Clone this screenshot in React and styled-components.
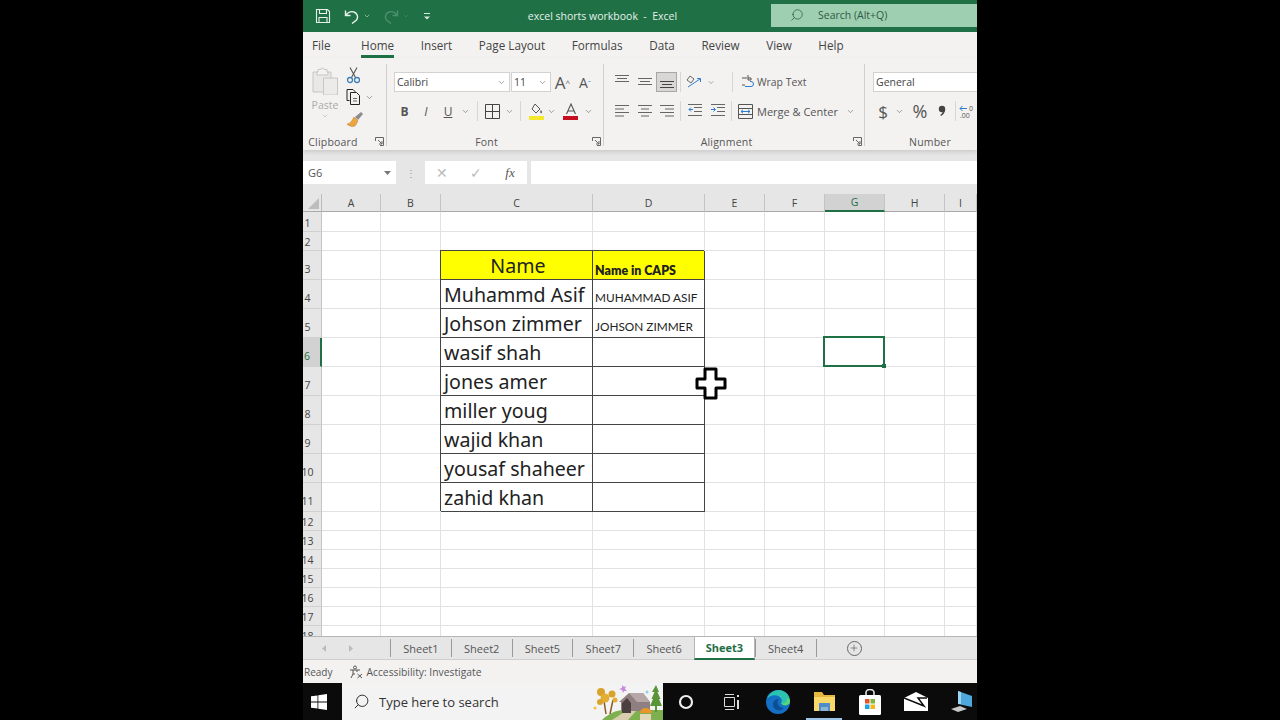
import React from 'react';
import styled, { createGlobalStyle } from 'styled-components';
import { ChevronDown, Search, Plus } from 'lucide-react';

const GlobalStyle = createGlobalStyle`
  html, body { margin: 0; padding: 0; background: #000; }
  body { font-family: "Open Sans", "Liberation Sans", sans-serif; }
`;

const Page = styled.div`
  width: 1280px;
  height: 720px;
  background: #000;
  display: flex;
  justify-content: center;
  overflow: hidden;
`;

const Screen = styled.div`
  width: 674px;
  height: 720px;
  display: flex;
  flex-direction: column;
  overflow: hidden;
  background: #e6e6e6;
  color: #444;
  font-size: 11px;
`;

const Gap = styled.span`
  width: ${p => p.$w}px;
  flex: none;
`;

/* title bar */
const TitleBar = styled.div`
  height: 32px;
  flex: none;
  background: #1f7145;
  color: #e6f0ea;
  display: flex;
  align-items: center;
`;

const QuickTools = styled.div`
  display: flex;
  align-items: center;
  width: 176px;
  padding-left: 12px;
  box-sizing: border-box;
  gap: 3px;
  flex: none;
`;

const TitleText = styled.div`
  width: 247px;
  flex: none;
  font-size: 10.5px;
  white-space: nowrap;
  text-align: center;
`;

const SearchBox = styled.div`
  margin-left: 45px;
  margin-top: -2px;
  flex: 1;
  height: 23px;
  background: #9fcfb1;
  color: #2f5a44;
  font-size: 10.5px;
  display: flex;
  align-items: center;
  gap: 14px;
  padding-left: 19px;
`;

const MirrorSearch = styled(Search)`
  transform: scaleX(-1);
  flex: none;
`;

/* ribbon tabs */
const TabRow = styled.div`
  height: 26px;
  flex: none;
  background: #f3f2f1;
  display: flex;
  align-items: center;
  padding-left: 9px;
  gap: 26.6px;
  font-size: 11.7px;
`;

const RibbonTab = styled.div`
  height: 26px;
  line-height: 27px;
  white-space: nowrap;
  box-sizing: border-box;
  color: #444;
  margin-right: ${p => (p.$first ? 4 : 0)}px;
  border-bottom: ${p => (p.$active ? '3px solid #1f7145' : '0')};
`;

/* ribbon body */
const Ribbon = styled.div`
  height: 92px;
  flex: none;
  background: #f3f2f1;
  display: flex;
  box-shadow: 0 2px 4px rgba(0, 0, 0, 0.12);
  position: relative;
  overflow: hidden;
`;

const Group = styled.div`
  width: ${p => p.$w}px;
  flex: none;
  display: flex;
  flex-direction: column;
  position: relative;
  box-sizing: border-box;
  padding-left: ${p => p.$pad || 0}px;
  &::after {
    content: '';
    position: absolute;
    right: 0;
    top: 6px;
    bottom: 4px;
    width: 1px;
    background: ${p => (p.$last ? 'transparent' : '#d2d0ce')};
  }
`;

const GroupBody = styled.div`
  height: 76px;
  display: flex;
  flex-direction: column;
  gap: 9px;
  padding-top: 14px;
  box-sizing: border-box;
`;

const GroupLabel = styled.div`
  height: 16px;
  font-size: 10.5px;
  letter-spacing: 0.2px;
  line-height: 17px;
  text-align: center;
  color: #555;
  margin-left: ${p => -(p.$pad || 0)}px;
  padding: 0 ${p => p.$right || 0}px 0 ${p => p.$left || 0}px;
`;

const Launcher = styled.svg`
  position: absolute;
  right: 3px;
  bottom: 4px;
  width: 9px;
  height: 9px;
`;

const ToolRow = styled.div`
  display: flex;
  align-items: center;
  height: 20px;
  flex: none;
`;

const Slot = styled.div`
  width: ${p => p.$w}px;
  height: 20px;
  flex: none;
  display: flex;
  align-items: center;
  justify-content: center;
  color: #555;
  box-sizing: border-box;
  font-size: ${p => p.$size || 12}px;
  font-weight: ${p => (p.$bold ? 700 : 400)};
  font-style: ${p => (p.$italic ? 'italic' : 'normal')};
  text-decoration: ${p => (p.$under ? 'underline' : 'none')};
  background: ${p => (p.$active ? '#d9d7d5' : 'transparent')};
  outline: ${p => (p.$active ? '1px solid #a9a7a5' : '0')};
  outline-offset: -1px;
`;

const Caret = styled.sup`
  font-size: 8px;
  color: ${p => p.$color || '#555'};
`;

const ToolSep = styled.div`
  width: 1px;
  height: 20px;
  background: #d8d6d4;
  flex: none;
`;

const Select = styled.div`
  width: ${p => p.$w}px;
  height: 20px;
  flex: none;
  box-sizing: border-box;
  background: #fff;
  border: 1px solid #d4d2d0;
  display: flex;
  align-items: center;
  justify-content: space-between;
  padding: 0 3px 0 2px;
  font-size: 10.5px;
  color: #444;
  margin-right: ${p => p.$mr || 0}px;
`;

const LabelTool = styled.div`
  display: flex;
  align-items: center;
  gap: ${p => p.$gap || 4}px;
  font-size: ${p => p.$size || 11}px;
  color: #555;
  white-space: nowrap;
`;

const ClipboardBody = styled.div`
  height: 76px;
  display: flex;
  padding: 7px 0 0 9px;
  box-sizing: border-box;
`;

const PasteColumn = styled.div`
  width: 26px;
  padding-top: 2px;
  display: flex;
  flex-direction: column;
  align-items: center;
  font-size: 10.5px;
  color: #aaa;
`;

const PasteLabel = styled.span`
  margin-top: 3px;
`;

const ClipboardTools = styled.div`
  margin-left: 2px;
  display: flex;
  flex-direction: column;
  gap: 2px;
`;

const ClipboardRow = styled.div`
  height: 20px;
  display: flex;
  align-items: center;
  gap: 4px;
  padding-left: 6px;
`;

/* formula bar */
const FormulaBar = styled.div`
  height: 44px;
  flex: none;
  display: flex;
  align-items: center;
  padding-top: 1px;
  box-sizing: border-box;
`;

const NameBox = styled.div`
  width: 93px;
  height: 23px;
  background: #fff;
  font-size: 11px;
  color: #555;
  display: flex;
  align-items: center;
  justify-content: space-between;
  padding: 0 5px;
  box-sizing: border-box;
`;

const Dots = styled.div`
  width: 29px;
  text-align: center;
  color: #999;
  font-size: 10px;
`;

const FormulaButtons = styled.div`
  width: 102px;
  height: 23px;
  background: #fff;
  display: grid;
  grid-template-columns: 34px 34px 34px;
  align-items: center;
  justify-items: center;
  color: #bbb;
  font-size: 14px;
  margin-right: 4px;
`;

const Fx = styled.span`
  font-family: "Liberation Serif", serif;
  font-style: italic;
  font-size: 13px;
  color: #555;
`;

const FormulaInput = styled.div`
  flex: 1;
  height: 23px;
  background: #fff;
`;

/* sheet */
const SheetArea = styled.div`
  height: 442px;
  flex: none;
  position: relative;
  overflow: hidden;
  background: #fff;
`;

const SheetGrid = styled.div`
  display: grid;
  grid-template-columns: 19px 59px 60px 152px 112px 60px 60px 60px 60px 32px;
  grid-template-rows: 18px 20px 19px repeat(9, 29px) repeat(7, 19px);
`;

const CornerCell = styled.div`
  background: #e6e6e6;
  border-right: 1px solid #bbb;
  border-bottom: 1px solid #aaa;
  box-sizing: border-box;
  display: flex;
  align-items: flex-end;
  justify-content: flex-end;
  padding: 0 2px 2px 0;
`;

const ColHead = styled.div`
  background: ${p => (p.$selected ? '#d2d2d2' : '#e6e6e6')};
  border-right: 1px solid #c4c4c4;
  border-bottom: ${p => (p.$selected ? '2px solid #1f7145' : '1px solid #aaa')};
  box-sizing: border-box;
  font-size: 10.5px;
  color: ${p => (p.$selected ? '#1f6e43' : '#444')};
  display: flex;
  align-items: center;
  justify-content: center;
`;

const RowHead = styled.div`
  background: ${p => (p.$selected ? '#d2d2d2' : '#e6e6e6')};
  border-right: ${p => (p.$selected ? '2px solid #1f7145' : '1px solid #c4c4c4')};
  border-bottom: 1px solid #d0d0d0;
  box-sizing: border-box;
  font-size: 10.5px;
  line-height: 14px;
  color: ${p => (p.$selected ? '#1f6e43' : '#444')};
  display: flex;
  align-items: flex-end;
  justify-content: center;
  padding: 0 9px ${p => (p.$tall ? 3 : 1)}px 0;
  overflow: hidden;
`;

const Cell = styled.div`
  box-sizing: border-box;
  border-right: 1px solid #e2e2e2;
  border-bottom: 1px solid #e2e2e2;
  background: #fff;
`;

const BoxedCell = styled.div`
  box-sizing: border-box;
  border-right: 1px solid #444;
  border-bottom: 1px solid #444;
  box-shadow: -1px -1px 0 0 #444;
  background: ${p => (p.$fill ? '#ffff00' : '#fff')};
  color: #222;
  white-space: nowrap;
  overflow: hidden;
  display: flex;
`;

const NameCell = styled(BoxedCell)`
  align-items: center;
  justify-content: ${p => (p.$center ? 'center' : 'flex-start')};
  padding: 1px 0 0 3px;
  font-family: "Noto Sans", sans-serif;
  font-size: 19.6px;
`;

const CapsCell = styled(BoxedCell)`
  align-items: flex-end;
  padding: 0 0 ${p => (p.$bold ? 1 : 3)}px 2px;
  font-family: "Lato", sans-serif;
  font-size: ${p => (p.$bold ? 12.4 : 11.8)}px;
  font-weight: ${p => (p.$bold ? 800 : 400)};
`;

const Selection = styled.div`
  position: absolute;
  left: 520px;
  top: 142px;
  width: 62px;
  height: 31px;
  box-sizing: border-box;
  border: 2px solid #1f7145;
  &::after {
    content: '';
    position: absolute;
    right: -3px;
    bottom: -3px;
    width: 4px;
    height: 4px;
    background: #1f7145;
  }
`;

const CrossCursor = styled.svg`
  position: absolute;
  left: 392px;
  top: 173px;
  width: 32px;
  height: 33px;
`;

/* sheet tabs */
const SheetTabs = styled.div`
  height: 24px;
  flex: none;
  background: #e6e6e6;
  border-top: 1px solid #b5b5b5;
  border-bottom: 1px solid #cfcfcf;
  box-sizing: border-box;
  display: flex;
  align-items: center;
  font-size: 11px;
  color: #555;
`;

const TabNav = styled.div`
  width: 87px;
  flex: none;
  display: flex;
  gap: 19px;
  padding-left: 17px;
  box-sizing: border-box;
`;

const SheetTab = styled.div`
  width: 60.8px;
  height: ${p => (p.$active ? 23 : 18)}px;
  flex: none;
  box-sizing: border-box;
  display: flex;
  align-items: center;
  justify-content: center;
  background: ${p => (p.$active ? '#fff' : 'transparent')};
  color: ${p => (p.$active ? '#1f6e43' : '#555')};
  font-weight: ${p => (p.$active ? 700 : 400)};
  border-left: 1px solid ${p => (p.$active ? '#b5b5b5' : '#9a9a9a')};
  border-right: ${p => (p.$active ? '1px solid #b5b5b5' : '0')};
  border-bottom: ${p => (p.$active ? '2px solid #1f7145' : '0')};
`;

const TabEnd = styled.div`
  width: 1px;
  height: 18px;
  background: #9a9a9a;
`;

const AddSheet = styled.div`
  width: 15px;
  height: 15px;
  margin-left: 30px;
  border-radius: 50%;
  border: 1px solid #666;
  box-sizing: border-box;
  display: flex;
  align-items: center;
  justify-content: center;
  color: #555;
`;

/* status bar */
const StatusBar = styled.div`
  height: 23px;
  flex: none;
  background: #f3f2f1;
  display: flex;
  align-items: center;
  font-size: 10px;
  color: #555;
  padding-left: 1px;
  box-sizing: border-box;
`;

const StatusItem = styled.div`
  display: flex;
  align-items: center;
  gap: 3px;
  margin-left: ${p => p.$ml || 0}px;
  font-size: ${p => p.$size || 10}px;
`;

/* taskbar */
const Taskbar = styled.div`
  height: 37px;
  flex: none;
  background: #0b0b0b;
  display: flex;
  align-items: stretch;
`;

const StartButton = styled.div`
  width: 39px;
  padding-right: 7px;
  box-sizing: border-box;
  flex: none;
  display: flex;
  align-items: center;
  justify-content: center;
`;

const TaskSearch = styled.div`
  width: 321px;
  flex: none;
  background: #f3f3f3;
  display: flex;
  align-items: center;
  padding-left: 11px;
  gap: 9px;
  font-size: 13px;
  color: #333;
  box-sizing: border-box;
  position: relative;
`;

const SearchArt = styled.svg`
  position: absolute;
  right: 0;
  top: 0;
  width: 71px;
  height: 37px;
`;

const TaskIcon = styled.div`
  width: 46px;
  flex: none;
  display: flex;
  align-items: center;
  justify-content: center;
  position: relative;
  ${p => p.$open && `
    &::after {
      content: '';
      position: absolute;
      left: 5px;
      right: 5px;
      bottom: 0;
      height: 2px;
      background: #9ec4e8;
    }
  `}
`;

const Chev = ({ color = '#666', size = 9 }) => <ChevronDown size={size} color={color} strokeWidth={1.6} />;

const Lines = ({ align, active }) => {
  const start = align === 'top' ? 1 : align === 'middle' ? 4 : 7;
  return (
    <svg width="16" height="14" viewBox="0 0 16 14" stroke={active ? '#444' : '#666'} strokeWidth="1">
      {[0, 1, 2].map(i => (
        <line key={i} x1={i === 1 ? 3 : 1} x2={i === 1 ? 13 : 15} y1={start + i * 3 - 0.5} y2={start + i * 3 - 0.5} />
      ))}
    </svg>
  );
};

const HLines = ({ kind }) => {
  const widths = kind === 'left' ? [[1, 15], [1, 10], [1, 15], [1, 10]]
    : kind === 'right' ? [[1, 15], [6, 15], [1, 15], [6, 15]]
    : [[1, 15], [4, 12], [1, 15], [4, 12]];
  return (
    <svg width="16" height="14" viewBox="0 0 16 14" stroke="#666" strokeWidth="1">
      {widths.map(([a, b], i) => <line key={i} x1={a} x2={b} y1={1.5 + i * 3.5} y2={1.5 + i * 3.5} />)}
    </svg>
  );
};

const Indent = ({ flip }) => (
  <svg width="16" height="14" viewBox="0 0 16 14" fill="none" stroke="#666">
    <line x1="7" x2="15" y1="3.5" y2="3.5" />
    <line x1="7" x2="15" y1="7.5" y2="7.5" />
    <line x1="1" x2="15" y1="11.5" y2="11.5" />
    <line x1="1" x2="15" y1="0.5" y2="0.5" />
    <path d={flip ? 'M1 5.5h4M3.5 3.5l2 2-2 2' : 'M6 5.5H2M4 3.5l-2 2 2 2'} stroke="#2b7cd3" />
  </svg>
);

const SaveIcon = () => (
  <svg width="16" height="16" viewBox="0 0 16 16" fill="none" stroke="#e8f2ec" strokeWidth="1.1">
    <path d="M1.5 1.5h11l2 2v11h-13z" />
    <path d="M4.5 1.5v4h7v-4M4 14.5v-5h8v5" />
  </svg>
);

const UndoIcon = ({ color, flip }) => (
  <svg width="16" height="15" viewBox="0 0 16 15" fill="none" stroke={color} strokeWidth="1.4">
    <path
      transform={flip ? 'matrix(-1 0 0 1 16 0)' : undefined}
      d="M1.5 1.5v5h5M1.7 6.3C4 3.300 7 2 10 3c3.500 1.200 4.500 5.500 2.500 8L8 14.500"
    />
  </svg>
);

const QatIcon = () => (
  <svg width="8" height="9" viewBox="0 0 8 9" fill="none" stroke="#d7e8de">
    <path d="M1 1.500h6" />
    <path d="M1 4.500l3 3 3-3" fill="#d7e8de" stroke="none" />
  </svg>
);

const PasteIcon = () => (
  <svg width="26" height="28" viewBox="0 0 26 28" fill="none" stroke="#c8c6c4">
    <path d="M1 5h18v20H1z" fill="#e9e8e7" />
    <path d="M6 5V2.500h3a1.500 1.500 0 013 0h3V5h1v3H5V5z" fill="#f3f2f1" />
    <path d="M11.500 11h14v17h-14z" fill="#ecebea" />
  </svg>
);

const ScissorsIcon = () => (
  <svg width="15" height="17" viewBox="0 0 15 17" fill="none">
    <path d="M4 .500l5.500 10M11 .500L5.500 10.500" stroke="#555" strokeWidth="1.100" />
    <circle cx="4" cy="13" r="2.500" stroke="#3f7fb5" strokeWidth="1.300" />
    <circle cx="11" cy="13" r="2.500" stroke="#3f7fb5" strokeWidth="1.300" />
  </svg>
);

const CopyIcon = () => (
  <svg width="15" height="16" viewBox="0 0 15 16" fill="none" stroke="#222">
    <path d="M1 .500h6l2 2V4M1 .500v11h2.500" />
    <path d="M4.500 3.500h6l3 3v9h-9z" />
    <path d="M7 9.500h4M7 12h4" stroke="#666" />
  </svg>
);

const BrushIcon = () => (
  <svg width="18" height="16" viewBox="0 0 18 16">
    <path d="M8 6l4 4-3 5c-3 1-6 0-8-2 3 0 5-3 7-7z" fill="#eda63f" stroke="#c08430" strokeWidth=".6" />
    <path d="M9 6l6-5 2 2-5 6z" fill="#8c8c8c" />
  </svg>
);

const BordersIcon = () => (
  <svg width="15" height="15" viewBox="0 0 15 15" fill="none" stroke="#444">
    <path d="M.5.500h14v14H.5zM7.500.500v14M.5 7.500h14" />
  </svg>
);

const FillIcon = () => (
  <svg width="16" height="17" viewBox="0 0 16 17" fill="none">
    <path d="M6 1l5 5-4 4-4-4z" stroke="#555" />
    <path d="M12 7c1 1.500 1.500 2.500 0 3.500-1-1-1-2 0-3.500z" fill="#555" />
    <rect x="0" y="13" width="15" height="4" fill="#f5e92e" />
  </svg>
);

const FontColorIcon = () => (
  <svg width="16" height="17" viewBox="0 0 16 17" fill="none">
    <path d="M3.500 11L8 1l4.500 10M5 8h6" stroke="#555" strokeWidth="1.100" />
    <rect x="0" y="13" width="15" height="4" fill="#c50f1f" />
  </svg>
);

const OrientIcon = () => (
  <svg width="17" height="14" viewBox="0 0 17 14" fill="none" stroke="#666">
    <path d="M1 5l3-4 4 3-3 4z" />
    <path d="M2 12L14 4M11 3.500h3.500V7" stroke="#2b7cd3" />
  </svg>
);

const WrapIcon = () => (
  <svg width="14" height="16" viewBox="0 0 14 16" fill="none" stroke="#555">
    <path d="M1 4h5M1 11h3" />
    <path d="M7 1v5M7 4h3v2H7" />
    <path d="M4 12.500h6a2.500 2.500 0 000-5H9" stroke="#2b7cd3" />
  </svg>
);

const MergeIcon = () => (
  <svg width="15" height="15" viewBox="0 0 15 15" fill="none" stroke="#555">
    <path d="M.5.500h14v14H.5zM.5 4.500h14M.5 10.500h14" />
    <path d="M3 7.500h9M5 5.800L3 7.500l2 1.700M10 5.800l2 1.700-2 1.700" stroke="#2b7cd3" />
  </svg>
);

const CommaIcon = () => (
  <svg width="8" height="12" viewBox="0 0 8 12" fill="#444">
    <circle cx="4" cy="4" r="3.200" />
    <path d="M7.200 4c0 3-1.500 5.500-4.200 7l-.7-1c1.700-1.200 2.500-2.500 2.500-4z" />
  </svg>
);

const DecimalIcon = () => (
  <svg width="18" height="15" viewBox="0 0 18 15" fill="none" stroke="#2b7cd3">
    <path d="M1 4.500h7M3.500 2L1 4.500 3.500 7" />
    <text x="1" y="14" fontSize="7" fill="#555" stroke="none">.00</text>
    <text x="10" y="7" fontSize="7" fill="#555" stroke="none">0</text>
  </svg>
);

const LauncherIcon = () => (
  <Launcher viewBox="0 0 9 9" fill="none" stroke="#666">
    <path d="M.5 4V.5H8.500V8.500H5M3 3l4 4M4 7h3V4" />
  </Launcher>
);

const FileExplorer = () => (
  <svg width="21" height="19" viewBox="0 0 21 19">
    <path d="M0 0h8l2 3h11v16H0z" fill="#e7b63e" />
    <path d="M0 5h21v14H0z" fill="#f8d868" />
    <path d="M5 11h11v8h-2v-4H7v4H5z" fill="#4d8ec9" />
    <rect x="7" y="15" width="7" height="4" fill="#8db4d8" />
  </svg>
);

const EdgeIcon = () => (
  <svg width="24" height="24" viewBox="0 0 24 24">
    <circle cx="12" cy="12" r="12" fill="#1470c4" />
    <path d="M1 9C3 3 8 0 13 0c6 0 11 5 11 11 0 4-4 5-7 4-2-1-2-3-1-5C14 5 6 3 1 9z" fill="#2cc2b2" />
    <path d="M24 11c0 4-4 5-7 4-1-.5-1.500-1-2-2 3 1 6 0 6-5 2 1 3 2 3 3z" fill="#58d675" />
    <path d="M7 14c0-3 3-5 6-5-2 2-2 5 0 7 1 1 3 2 5 2-2 2-4 3-7 2-3-1-4-3-4-6z" fill="#0c4f94" />
  </svg>
);

const StoreIcon = () => (
  <svg width="22" height="26" viewBox="0 0 22 26">
    <path d="M7 7V3.500a4 3 0 018 0V7" fill="none" stroke="#eee" strokeWidth="1.500" />
    <rect x="0" y="6" width="22" height="20" rx="1.500" fill="#fff" />
    <rect x="6" y="10" width="4.500" height="4.500" fill="#e8532d" />
    <rect x="11.500" y="10" width="4.500" height="4.500" fill="#7bb93a" />
    <rect x="6" y="15.500" width="4.500" height="4.500" fill="#1fa4e0" />
    <rect x="11.500" y="15.500" width="4.500" height="4.500" fill="#f4b81f" />
  </svg>
);

const MailIcon = () => (
  <svg width="24" height="19" viewBox="0 0 24 19">
    <path d="M0 6L12 0l12 6v13H0z" fill="#fff" />
    <path d="M0 6l20 8-6-8h9" fill="none" stroke="#0b0b0b" strokeWidth="1.500" />
  </svg>
);

const PcIcon = () => (
  <svg width="24" height="24" viewBox="0 0 24 24">
    <path d="M8 1l14 5v11L8 14z" fill="#4fa8dc" />
    <path d="M8 1l3 1v12l-3 0z" fill="#9fd3ef" />
    <path d="M1 19l9-3 7 3-9 3z" fill="#c8c8c8" />
  </svg>
);

const columns = ['A', 'B', 'C', 'D', 'E', 'F', 'G', 'H', 'I'];
const rowCount = 18;

const table = {
  3: ['Name', 'Name in CAPS'],
  4: ['Muhammd Asif', 'MUHAMMAD ASIF'],
  5: ['Johson zimmer', 'JOHSON ZIMMER'],
  6: ['wasif shah', ''],
  7: ['jones amer', ''],
  8: ['miller youg', ''],
  9: ['wajid khan', ''],
  10: ['yousaf shaheer', ''],
  11: ['zahid khan', ''],
};

const ribbonTabs = ['File', 'Home', 'Insert', 'Page Layout', 'Formulas', 'Data', 'Review', 'View', 'Help'];
const sheets = ['Sheet1', 'Sheet2', 'Sheet5', 'Sheet7', 'Sheet6', 'Sheet3', 'Sheet4'];

function SheetRows() {
  const rows = [];
  for (let r = 1; r <= rowCount; r++) {
    rows.push(<RowHead key={`h${r}`} $selected={r === 6} $tall={r >= 3 && r <= 11}>{r}</RowHead>);
    columns.forEach(col => {
      const row = table[r];
      if (row && col === 'C') {
        rows.push(<NameCell key={col + r} $fill={r === 3} $center={r === 3}>{row[0]}</NameCell>);
      } else if (row && col === 'D') {
        rows.push(<CapsCell key={col + r} $fill={r === 3} $bold={r === 3}>{row[1]}</CapsCell>);
      } else {
        rows.push(<Cell key={col + r} />);
      }
    });
  }
  return rows;
}

export default function App() {
  return (
    <Page>
      <GlobalStyle />
      <Screen>
        <TitleBar>
          <QuickTools>
            <SaveIcon />
            <Gap $w={7} />
            <UndoIcon color="#e8f2ec" />
            <Chev color="#d7e8de" size={8} />
            <Gap $w={6} />
            <UndoIcon color="#4f8e6b" flip />
            <Chev color="#4f8e6b" size={8} />
            <Gap $w={7} />
            <QatIcon />
          </QuickTools>
          <TitleText>excel shorts workbook &nbsp;-&nbsp; Excel</TitleText>
          <SearchBox>
            <MirrorSearch size={14} color="#2f5a44" strokeWidth={1.3} />
            Search (Alt+Q)
          </SearchBox>
        </TitleBar>

        <TabRow>
          {ribbonTabs.map(t => (
            <RibbonTab key={t} $first={t === 'File'} $active={t === 'Home'}>{t}</RibbonTab>
          ))}
        </TabRow>

        <Ribbon>
          <Group $w={84}>
            <ClipboardBody>
              <PasteColumn>
                <PasteIcon />
                <PasteLabel>Paste</PasteLabel>
                <Chev color="#aaa" size={8} />
              </PasteColumn>
              <ClipboardTools>
                <ClipboardRow><ScissorsIcon /></ClipboardRow>
                <ClipboardRow><CopyIcon /><Chev /></ClipboardRow>
                <ClipboardRow><BrushIcon /></ClipboardRow>
              </ClipboardTools>
            </ClipboardBody>
            <GroupLabel $right={24}>Clipboard</GroupLabel>
            <LauncherIcon />
          </Group>

          <Group $w={217} $pad={7}>
            <GroupBody>
              <ToolRow>
                <Select $w={116} $mr={1}>Calibri<Chev /></Select>
                <Select $w={40}>11<Chev /></Select>
                <Slot $w={23} $size={17}>A<Caret>^</Caret></Slot>
                <Slot $w={22} $size={14}>A<Caret $color="#2b7cd3">ˇ</Caret></Slot>
              </ToolRow>
              <ToolRow>
                <Slot $w={21} $bold>B</Slot>
                <Slot $w={22} $italic>I</Slot>
                <Slot $w={22} $under>U</Slot>
                <Slot $w={12}><Chev /></Slot>
                <Gap $w={6} />
                <ToolSep />
                <Gap $w={6} />
                <Slot $w={16}><BordersIcon /></Slot>
                <Slot $w={18}><Chev /></Slot>
                <Gap $w={2} />
                <ToolSep />
                <Gap $w={8} />
                <Slot $w={16}><FillIcon /></Slot>
                <Slot $w={12}><Chev /></Slot>
                <Gap $w={4} />
                <Slot $w={20}><FontColorIcon /></Slot>
                <Slot $w={14}><Chev /></Slot>
              </ToolRow>
            </GroupBody>
            <GroupLabel $pad={7} $right={18}>Font</GroupLabel>
            <LauncherIcon />
          </Group>

          <Group $w={261} $pad={7}>
            <GroupBody>
              <ToolRow>
                <Slot $w={22}><Lines align="top" /></Slot>
                <Slot $w={23}><Lines align="middle" /></Slot>
                <Slot $w={21} $active><Lines align="bottom" active /></Slot>
                <Gap $w={3} />
                <ToolSep />
                <Slot $w={26}><OrientIcon /></Slot>
                <Slot $w={8}><Chev /></Slot>
                <Gap $w={17} />
                <ToolSep />
                <Gap $w={8} />
                <LabelTool $gap={2} $size={10.4}><WrapIcon />Wrap Text</LabelTool>
              </ToolRow>
              <ToolRow>
                <Slot $w={22}><HLines kind="left" /></Slot>
                <Slot $w={23}><HLines kind="center" /></Slot>
                <Slot $w={21}><HLines kind="right" /></Slot>
                <Gap $w={3} />
                <ToolSep />
                <Slot $w={28}><Indent /></Slot>
                <Slot $w={18}><Indent flip /></Slot>
                <Gap $w={4} />
                <ToolSep />
                <Gap $w={6} />
                <LabelTool><MergeIcon />Merge &amp; Center</LabelTool>
                <Gap $w={8} />
                <Chev />
              </ToolRow>
            </GroupBody>
            <GroupLabel $pad={7} $right={16}>Alignment</GroupLabel>
            <LauncherIcon />
          </Group>

          <Group $w={112} $pad={8} $last>
            <GroupBody>
              <ToolRow><Select $w={120}>General</Select></ToolRow>
              <ToolRow>
                <Slot $w={20} $size={17}>$</Slot>
                <Slot $w={12}><Chev /></Slot>
                <Slot $w={30} $size={18}>%</Slot>
                <Slot $w={14}><CommaIcon /></Slot>
                <Gap $w={6} />
                <ToolSep />
                <Gap $w={3} />
                <DecimalIcon />
              </ToolRow>
            </GroupBody>
            <GroupLabel $pad={8} $left={18}>Number</GroupLabel>
          </Group>
        </Ribbon>

        <FormulaBar>
          <NameBox>G6<svg width="7" height="4"><path d="M0 0h7L3.500 4z" fill="#777" /></svg></NameBox>
          <Dots>⋮</Dots>
          <FormulaButtons>
            <span>✕</span>
            <span>✓</span>
            <Fx>fx</Fx>
          </FormulaButtons>
          <FormulaInput />
        </FormulaBar>

        <SheetArea>
          <SheetGrid>
            <CornerCell>
              <svg width="11" height="11"><path d="M11 0v11H0z" fill="#bdbdbd" /></svg>
            </CornerCell>
            {columns.map(c => <ColHead key={c} $selected={c === 'G'}>{c}</ColHead>)}
            <SheetRows />
          </SheetGrid>
          <Selection />
          <CrossCursor viewBox="0 0 32 33">
            <path
              d="M10 2h11v10h9v9h-9v10H10V21H2v-9h8z"
              fill="#fff"
              stroke="#000"
              strokeWidth="3"
              strokeLinejoin="round"
            />
          </CrossCursor>
        </SheetArea>

        <SheetTabs>
          <TabNav>
            <svg width="8" height="9"><path d="M6 1L2 4.500 6 8z" fill="#bbb" /></svg>
            <svg width="8" height="9"><path d="M2 1l4 3.500L2 8z" fill="#bbb" /></svg>
          </TabNav>
          {sheets.map(s => (
            <SheetTab key={s} $active={s === 'Sheet3'}>{s}</SheetTab>
          ))}
          <TabEnd />
          <AddSheet><Plus size={10} strokeWidth={1.5} /></AddSheet>
        </SheetTabs>

        <StatusBar>
          <StatusItem>Ready</StatusItem>
          <StatusItem $ml={17} $size={10.3}>
            <svg width="14" height="14" viewBox="0 0 14 14" fill="none" stroke="#555">
              <circle cx="6" cy="2.500" r="1.500" />
              <path d="M1 5h10M4 5v4l-2 4M8 5v2M8.500 9l4.500 4M13 9l-4.500 4M4 9h2" />
            </svg>
            Accessibility: Investigate
          </StatusItem>
        </StatusBar>

        <Taskbar>
          <StartButton>
            <svg width="16" height="16" viewBox="0 0 16 16" fill="#fff">
              <path d="M0 2.300L6.500 1.400v6.200H0zM7.300 1.300L16 0v7.600H7.300zM0 8.400h6.500v6.200L0 13.700zM7.300 8.400H16V16l-8.700-1.300z" />
            </svg>
          </StartButton>
          <TaskSearch>
            <MirrorSearch size={17} color="#222" strokeWidth={1.3} />
            Type here to search
            <SearchArt viewBox="0 0 71 37">
              <path d="M10 37c6-6 14-10 22-10h39v10z" fill="#7fb04f" />
              <path d="M20 37l14-9h10l-8 9z" fill="#d9cdb0" />
              <path d="M48 37v-6h11v6z" fill="#e2d7b8" />
              <path d="M27 19l10-9h14l7 9v9H29v-9z" fill="#8f7f80" />
              <path d="M30 30V20l5-5 4 5v10z" fill="#4c3f3f" />
              <path d="M37 10h14l7 9H45z" fill="#b7a8a8" />
              <path d="M48 30c0-6 10-7 12-1v1z" fill="#e8962c" />
              <path d="M14 31L12 18M18 31l3-14" stroke="#8a5a20" strokeWidth="1.500" fill="none" />
              <circle cx="9" cy="9" r="4" fill="#d9a22a" />
              <circle cx="13" cy="15" r="4.500" fill="#e3ae32" />
              <circle cx="8" cy="19" r="3" fill="#d9a22a" />
              <circle cx="20" cy="11" r="3.500" fill="#d9a22a" />
              <circle cx="23" cy="17" r="2.500" fill="#e3ae32" />
              <circle cx="3" cy="25" r="1.500" fill="#eec33e" />
              <path d="M30 2l2 2 2-1-1 3 2 2-3 0-1 2-1-3-3-1 3-1z" fill="#c58ae0" />
              <path d="M64 2l3 7h-1.500l3 7h-1.500l3 7h-5v6h-2v-6h-5l3-7h-1.500l3-7H60z" fill="#5b9438" />
              <circle cx="55" cy="9" r="1.500" fill="#8fd0ea" />
            </SearchArt>
          </TaskSearch>
          <TaskIcon>
            <svg width="16" height="16"><circle cx="8" cy="8" r="6" fill="none" stroke="#eee" strokeWidth="2.200" /></svg>
          </TaskIcon>
          <TaskIcon>
            <svg width="16" height="16" viewBox="0 0 16 16" fill="none" stroke="#ddd">
              <path d="M.5 3.500h10v9H.5zM1 .5h9M1 15.500h9" />
              <path d="M14 1v2M14 6v9" strokeWidth="2" />
            </svg>
          </TaskIcon>
          <TaskIcon><EdgeIcon /></TaskIcon>
          <TaskIcon $open><FileExplorer /></TaskIcon>
          <TaskIcon><StoreIcon /></TaskIcon>
          <TaskIcon><MailIcon /></TaskIcon>
          <TaskIcon><PcIcon /></TaskIcon>
        </Taskbar>
      </Screen>
    </Page>
  );
}
